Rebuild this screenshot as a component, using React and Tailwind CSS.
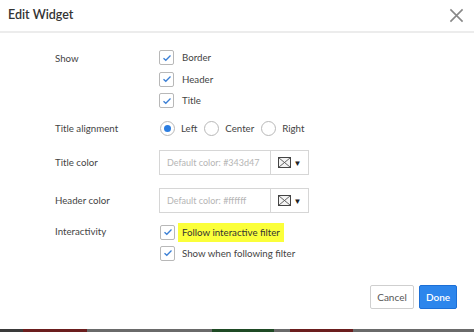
import React from "react";

const Check = () => (
  <span className="flex h-[15px] w-[15px] items-center justify-center rounded-[2px] border border-[#b8b8b8] bg-white">
    <svg width="10" height="8" viewBox="0 0 10 8" fill="none">
      <path d="M1.5 4.2 L3.8 6.3 L8.5 1.5" stroke="#3a7fd5" strokeWidth="1.3" />
    </svg>
  </span>
);

const Radio = ({ on }) => (
  <span className="flex h-[15px] w-[15px] items-center justify-center rounded-full border border-[#b8b8b8] bg-white">
    {on && <span className="h-[7px] w-[7px] rounded-full bg-[#2b7de0]" />}
  </span>
);

const Swatch = () => (
  <div className="flex h-[25px] w-[38px] items-center justify-center gap-[3px] border border-l-0 border-[#d6d6d6]">
    <svg width="13" height="11" viewBox="0 0 13 11">
      <rect x="0.5" y="0.5" width="12" height="10" fill="#f4f4f4" stroke="#444" />
      <path d="M1 1 L12 10 M12 1 L1 10" stroke="#555" strokeWidth="0.9" />
    </svg>
    <span className="text-[8px] leading-none text-[#222]">▼</span>
  </div>
);

export default function App() {
  return (
    <div className="relative h-[332px] w-[474px] overflow-hidden bg-white text-[#444]" style={{ fontFamily: "Lato, 'Open Sans', sans-serif" }}>
      <div className="flex h-[33px] items-center justify-between border-b-2 border-[#ececec] pl-2 pr-[10px]">
        <span className="text-[12.5px] font-semibold text-[#333]">Edit Widget</span>
        <svg width="15" height="15" viewBox="0 0 16 16">
          <path d="M1.5 1.5 L14.5 14.5 M14.5 1.5 L1.5 14.5" stroke="#888" strokeWidth="1.7" />
        </svg>
      </div>

      <div className="pl-[55px] pt-[17px] text-[9.7px]">
        <div className="flex">
          <div className="w-[104px] pt-[1px]">Show</div>
          <div className="flex flex-col gap-[6.5px]">
            {["Border", "Header", "Title"].map((t) => (
              <div key={t} className="flex items-center gap-[8px]">
                <Check />
                <span>{t}</span>
              </div>
            ))}
          </div>
        </div>

        <div className="mt-[13px] flex items-center">
          <div className="w-[105px]">Title alignment</div>
          <div className="flex items-center">
            <Radio on />
            <span className="ml-[6px] mr-[7px]">Left</span>
            <Radio />
            <span className="ml-[6px] mr-[7px]">Center</span>
            <Radio />
            <span className="ml-[6px]">Right</span>
          </div>
        </div>

        <div className="mt-[14px] flex items-center">
          <div className="w-[104px]">Title color</div>
          <div className="flex">
            <div className="flex h-[25px] w-[112px] items-center border border-[#d6d6d6] pl-[7px] text-[9px] text-[#b5b5b5]">Default color: #343d47</div>
            <Swatch />
          </div>
        </div>

        <div className="mt-[13px] flex items-center">
          <div className="w-[104px]">Header color</div>
          <div className="flex">
            <div className="flex h-[25px] w-[112px] items-center border border-[#d6d6d6] pl-[7px] text-[9px] text-[#b5b5b5]">Default color: #ffffff</div>
            <Swatch />
          </div>
        </div>

        <div className="mt-[10px] flex">
          <div className="w-[105px] pt-[1px]">Interactivity</div>
          <div className="flex flex-col gap-[4px]">
            <div className="flex items-center gap-[3px]">
              <Check />
              <span className="bg-[#fbff3a] px-[4px] py-[2px] text-[#333]">Follow interactive filter</span>
            </div>
            <div className="flex items-center gap-[7px]">
              <Check />
              <span>Show when following filter</span>
            </div>
          </div>
        </div>
      </div>

      <div className="absolute right-[17px] top-[285px] flex gap-[5px] text-[10px]">
        <button className="h-[24px] w-[44px] rounded-[2px] border border-[#cfcfcf] bg-white text-[#555]">Cancel</button>
        <button className="h-[24px] w-[38px] rounded-[2px] border border-[#1c6fd6] bg-[#2d86ec] font-semibold text-white">Done</button>
      </div>

      <div className="absolute bottom-0 left-0 flex h-[3px] w-full bg-[#6a6a6a]">
        <div className="w-[23px] bg-[#3a3a3a]" />
        <div className="w-[64px] bg-[#6b1e1e]" />
        <div className="w-[125px]" />
        <div className="w-[62px] bg-[#1f4a25]" />
        <div className="w-[16px]" />
        <div className="w-[63px] bg-[#6b1e1e]" />
      </div>
    </div>
  );
}
